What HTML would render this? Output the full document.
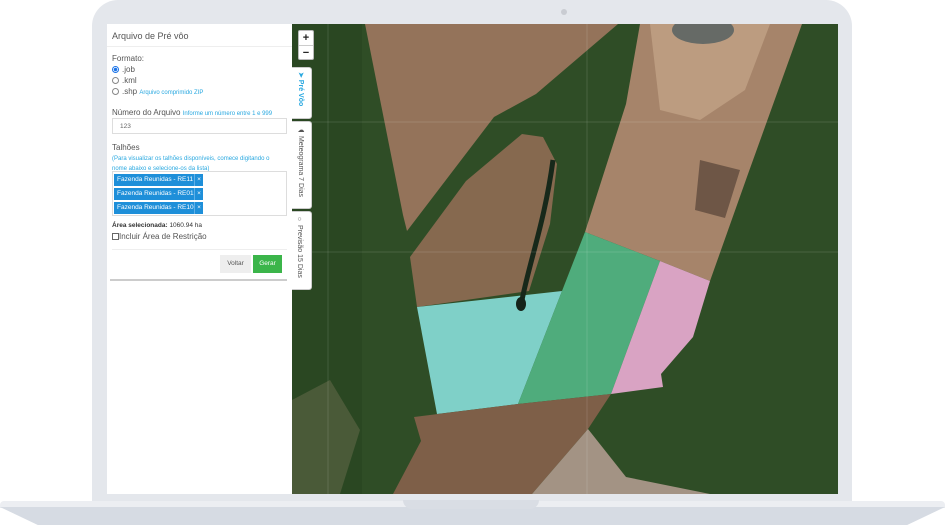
<!DOCTYPE html>
<html><head><meta charset="utf-8"><style>
*{margin:0;padding:0;box-sizing:border-box}
body{width:945px;height:525px;background:#fff;position:relative;overflow:hidden;font-family:"Liberation Sans",sans-serif;color:#444}
.bezel{position:absolute;left:92px;top:0;width:760px;height:512px;background:#e4e7ec;border-radius:26px 26px 0 0}
.cam{position:absolute;left:469px;top:9px;width:6px;height:6px;border-radius:50%;background:#c9ccd2}
.base1{position:absolute;left:0;top:501px;width:945px;height:7px;background:#eceef2;border-radius:4px 4px 0 0}
.base2{position:absolute;left:0;top:507px;width:945px;height:18px;background:#d6dbe3;clip-path:polygon(0 0,100% 0,96% 100%,4% 100%)}
.notch{position:absolute;left:403px;top:500px;width:136px;height:9px;background:#d9dde4;border-radius:0 0 12px 12px}
.screen{position:absolute;left:107px;top:24px;width:731px;height:470px;background:#fff;overflow:hidden}
.panel{position:absolute;left:0;top:0;width:185px;height:470px;background:#fff;font-size:8px}
.hd{height:23px;border-bottom:1px solid #eee;padding:7px 0 0 5px;font-size:9px;color:#555}
.lbl{position:absolute;color:#555}
.blue{color:#29a8e0;font-size:6px}
.radio{display:inline-block;width:7px;height:7px;border:1px solid #888;border-radius:50%;vertical-align:-1px;margin-right:3px;background:#fff}
.radio.on{border-color:#1a73e8;background:radial-gradient(#1a73e8 45%,#fff 55%)}
.tag{position:absolute;left:7px;height:12px;background:#1e8fd9;color:#fff;font-size:6.5px;line-height:12px;padding-left:3px;width:89px}
.tag b{position:absolute;right:0;top:0;width:9px;text-align:center;border-left:1px solid #5fb0e8;font-weight:normal}
.map{position:absolute;left:185px;top:0;width:546px;height:470px}
.tab{position:absolute;left:0;width:20px;background:#fff;border:1px solid #ccc;border-left:none;border-radius:0 3px 3px 0}
.tab span{position:absolute;left:4px;top:4px;writing-mode:vertical-rl;font-size:7px;color:#555;white-space:nowrap}
</style></head><body>
<div class="bezel"><div class="cam"></div></div>
<div class="base1"></div><div class="base2"></div><div class="notch"></div>
<div class="screen">
 <div class="panel">
  <div class="hd">Arquivo de Pré vôo</div>
  <div class="lbl" style="left:5px;top:30px">Formato:</div>
  <div class="lbl" style="left:5px;top:41px"><span class="radio on"></span>.job</div>
  <div class="lbl" style="left:5px;top:52px"><span class="radio"></span>.kml</div>
  <div class="lbl" style="left:5px;top:63px"><span class="radio"></span>.shp <span class="blue">Arquivo comprimido ZIP</span></div>
  <div class="lbl" style="left:5px;top:84px">Número do Arquivo <span class="blue">Informe um número entre 1 e 999</span></div>
  <div style="position:absolute;left:5px;top:94px;width:175px;height:16px;border:1px solid #ddd;font-size:6.5px;color:#666;padding:4px 0 0 7px">123</div>
  <div class="lbl" style="left:5px;top:119px">Talhões</div>
  <div class="lbl blue" style="left:5px;top:130px;line-height:10px">(Para visualizar os talhões disponíveis, comece digitando o<br>nome abaixo e selecione-os da lista)</div>
  <div style="position:absolute;left:5px;top:147px;width:175px;height:45px;border:1px solid #ddd"></div>
  <div class="tag" style="top:150px">Fazenda Reunidas - RE11<b>×</b></div>
  <div class="tag" style="top:164px">Fazenda Reunidas - RE01<b>×</b></div>
  <div class="tag" style="top:178px">Fazenda Reunidas - RE10<b>×</b></div>
  <div class="lbl" style="left:5px;top:198px;font-size:6.5px;color:#333"><b>Área selecionada:</b> 1060.94 ha</div>
  <div class="lbl" style="left:5px;top:208px"><span style="display:inline-block;width:7px;height:7px;border:1px solid #666;vertical-align:-1px"></span>Incluir Área de Restrição</div>
  <div style="position:absolute;left:5px;top:225px;width:175px;border-top:1px solid #eee"></div>
  <div style="position:absolute;left:113px;top:231px;width:31px;height:18px;background:#eee;font-size:6.5px;color:#555;text-align:center;line-height:18px">Voltar</div>
  <div style="position:absolute;left:146px;top:231px;width:29px;height:18px;background:#3bb54a;font-size:6.5px;color:#fff;text-align:center;line-height:18px">Gerar</div>
  <div style="position:absolute;left:3px;top:255px;width:177px;height:2px;background:#ccc"></div>
 </div>
 <div class="map">
  <svg width="546" height="470" viewBox="292 24 546 470" style="position:absolute;left:0;top:0">
   <rect x="292" y="24" width="546" height="470" fill="#2f4d26"/>
   <rect x="292" y="24" width="70" height="470" fill="#2a4722"/>
   <polygon points="292,400 330,380 360,430 340,494 292,494" fill="#4a5a38"/>
   <polygon points="365,24 618,24 536,94 494,117 407,231 403,215" fill="#94735a"/>
   <polygon points="410,257 466,181 522,134 543,137 557,164 550,224 529,291 417,307" fill="#86694f"/>
   <polygon points="640,24 802,24 748,174 710,281 660,261 585,232 626,104" fill="#a6846a"/>
   <polygon points="650,24 770,24 745,90 700,120 660,110" fill="#bc9c80"/>
   <ellipse cx="703" cy="30" rx="31" ry="14" fill="#666a66"/>
   <polygon points="700,160 740,170 725,218 695,210" fill="#6e5646"/>
   <polygon points="417,307 562,291 518,404 437,414" fill="#7fd0c8"/>
   <polygon points="585,232 660,261 611,394 518,404 562,291" fill="#4fac7c"/>
   <polygon points="660,261 710,281 693,337 661,374 663,387 611,394" fill="#d9a3c3"/>
   <polygon points="414,417 518,404 611,394 588,429 532,494 393,494 421,441" fill="#7e5f48"/>
   <polygon points="588,429 626,477 710,494 532,494" fill="#a39384"/>
   <path d="M553,160 C545,220 530,260 522,300" stroke="#17281a" stroke-width="5" fill="none"/>
   <ellipse cx="521" cy="304" rx="5" ry="7" fill="#15241a"/>
   <g stroke="#ffffff" stroke-opacity="0.12" stroke-width="1"><line x1="328" y1="24" x2="328" y2="494"/><line x1="587" y1="24" x2="587" y2="494"/><line x1="292" y1="122" x2="838" y2="122"/><line x1="292" y1="252" x2="838" y2="252"/></g>
  </svg>
  <div style="position:absolute;left:6px;top:6px;width:16px;height:30px;background:#fff;border:1px solid #bbb;border-radius:2px;font-size:11px;font-weight:bold;text-align:center;line-height:14px;color:#222">+<div style="border-top:1px solid #ccc">−</div></div>
  <div class="tab" style="top:43px;height:52px"><span style="color:#29a8e0;font-weight:bold">➤ Pré Vôo</span></div>
  <div class="tab" style="top:97px;height:88px"><span>☁ Meteograma 7 Dias</span></div>
  <div class="tab" style="top:187px;height:79px"><span>○ Previsão 15 Dias</span></div>
 </div>
</div>
</body></html>
